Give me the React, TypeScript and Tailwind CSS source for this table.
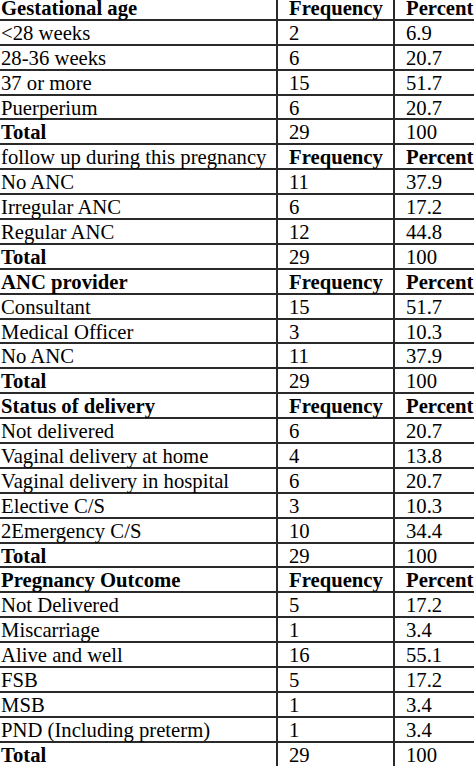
import React from "react";

type Row = { a: string; b: string; c: string; head?: boolean; boldA?: boolean; boldBC?: boolean };

const H = (a: string, boldA = true): Row => ({ a, b: "Frequency", c: "Percent", boldA, boldBC: true });
const R = (a: string, b: string, c: string): Row => ({ a, b, c });
const T = (b: string, c: string): Row => ({ a: "Total", b, c, boldA: true });

const rows: Row[] = [
  H("Gestational age"),
  R("<28 weeks", "2", "6.9"),
  R("28-36 weeks", "6", "20.7"),
  R("37 or more", "15", "51.7"),
  R("Puerperium", "6", "20.7"),
  T("29", "100"),
  H("follow up during this pregnancy", false),
  R("No ANC", "11", "37.9"),
  R("Irregular ANC", "6", "17.2"),
  R("Regular ANC", "12", "44.8"),
  T("29", "100"),
  H("ANC provider"),
  R("Consultant", "15", "51.7"),
  R("Medical Officer", "3", "10.3"),
  R("No ANC", "11", "37.9"),
  T("29", "100"),
  H("Status of delivery"),
  R("Not delivered", "6", "20.7"),
  R("Vaginal delivery at home", "4", "13.8"),
  R("Vaginal delivery in hospital", "6", "20.7"),
  R("Elective C/S", "3", "10.3"),
  R("2Emergency C/S", "10", "34.4"),
  T("29", "100"),
  H("Pregnancy Outcome"),
  R("Not Delivered", "5", "17.2"),
  R("Miscarriage", "1", "3.4"),
  R("Alive and well", "16", "55.1"),
  R("FSB", "5", "17.2"),
  R("MSB", "1", "3.4"),
  R("PND (Including preterm)", "1", "3.4"),
  T("29", "100"),
];

export default function App() {
  return (
    <div className="w-[474px] h-[766px] overflow-hidden bg-white text-black">
      <div
        className="ml-[-10px] mt-[-4px] w-[500px] text-[20.7px] leading-[24.9px] whitespace-nowrap"
        style={{ fontFamily: '"Liberation Serif", "Times New Roman", serif' }}
      >
        {rows.map((r, i) => (
          <div key={i} className="flex h-[24.9px] border-b-2 border-[#2a2a2a] box-border">
            <div className={`w-[288px] pl-[11px] border-r-2 border-[#2a2a2a] ${r.boldA ? "font-bold" : ""}`}>{r.a}</div>
            <div className={`w-[117px] pl-[11px] border-r-2 border-[#2a2a2a] ${r.boldBC ? "font-bold" : ""}`}>{r.b}</div>
            <div className={`flex-1 pl-[11px] ${r.boldBC ? "font-bold" : ""}`}>{r.c}</div>
          </div>
        ))}
      </div>
    </div>
  );
}
